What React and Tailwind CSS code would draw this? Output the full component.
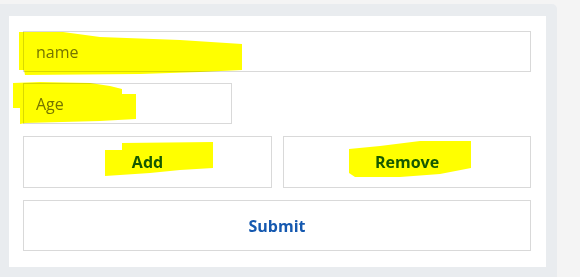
import React from 'react'

const font = { fontFamily: '"Open Sans", "Segoe UI", sans-serif' }

const Highlights = () => (
    <svg
        className="pointer-events-none absolute left-0 top-0 mix-blend-multiply"
        width="580"
        height="277"
        viewBox="0 0 580 277"
    >
        <g fill="#ffff00">
            <polygon points="19,32 63,32 100,37 180,40 242,44 242,70 200,72 140,74 25,75 24,70 19,70" />
            <polygon points="13,83 40,82 90,83 110,86 122,89 122,94 136,94 136,119 100,121 25,123 20,124 20,108 13,108" />
            <polygon points="105,150 122,150 122,143 213,142 213,168 180,170 150,173 105,176" />
            <polygon points="349,149 380,146 420,141 471,141 471,168 440,174 400,177 355,177 349,173" />
        </g>
    </svg>
)

const Button = ({ children, className = '' }) => (
    <button
        className={`flex items-center justify-center border border-[#d9d9d9] bg-white text-[16px] font-bold text-[#1559b0] ${className}`}
    >
        {children}
    </button>
)

export default function App() {
    return (
        <div className="relative h-[277px] w-[580px] overflow-hidden bg-[#f4f4f4] pt-1" style={font}>
            <div className="h-[300px] w-[557px] rounded-tr-[5px] bg-[#e9ecef] pl-[9px] pr-[11px] pt-3">
                <div className="flex h-[251px] flex-col bg-white pl-[14px] pr-[15px] pt-[15px]">
                    <input
                        className="h-[41px] w-full border border-[#d9d9d9] px-3 text-[16px] text-[#444] placeholder:text-[#757575] focus:outline-none"
                        placeholder="name"
                        style={font}
                    />
                    <input
                        className="mt-[11px] h-[41px] w-[209px] border border-[#d9d9d9] px-3 text-[16px] text-[#444] placeholder:text-[#757575] focus:outline-none"
                        placeholder="Age"
                        style={font}
                    />
                    <div className="mt-3 flex gap-[11px]">
                        <Button className="h-[52px] w-[249px]">Add</Button>
                        <Button className="h-[52px] flex-1">Remove</Button>
                    </div>
                    <Button className="mt-3 h-[51px] w-full">Submit</Button>
                </div>
            </div>
            <Highlights />
        </div>
    )
}
